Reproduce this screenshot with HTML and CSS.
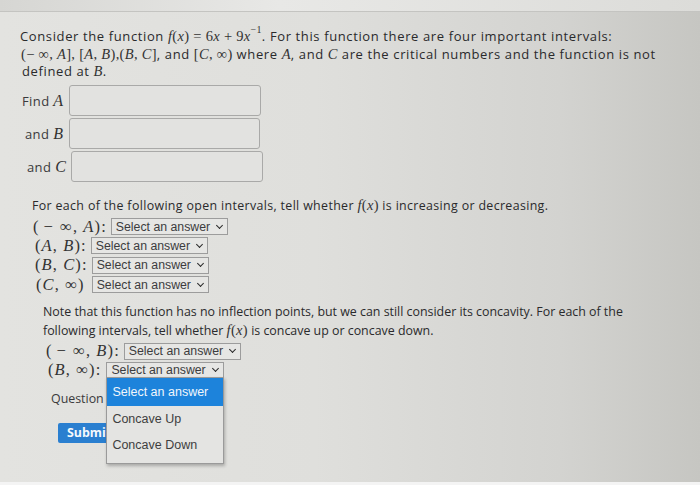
FILE: index.html
```html
<!DOCTYPE html>
<html>
<head>
<meta charset="utf-8">
<link rel="stylesheet" href="styles.css">
</head>
<body>
<div class="screen">
  <div class="topline"></div>
  <div class="intro">
    <p class="ln ln1">Consider the function <span class="m"><i>f</i>(<i>x</i>) = 6<i>x</i> + 9<i>x</i><sup>−1</sup></span>. For this function there are four important intervals:</p>
    <p class="ln ln2"><span class="m">(− ∞, <i>A</i>], [<i>A</i>, <i>B</i>),(<i>B</i>, <i>C</i>]</span>, and <span class="m">[<i>C</i>, ∞)</span> where <span class="m"><i>A</i></span>, and <span class="m"><i>C</i></span> are the critical numbers and the function is not</p>
    <p class="ln ln3">defined at <span class="m"><i>B</i></span>.</p>
  </div>

  <div class="finds">
    <div class="find f1"><span class="flabel">Find <span class="m"><i>A</i></span></span><span class="box"></span></div>
    <div class="find f2"><span class="flabel">and <span class="m"><i>B</i></span></span><span class="box"></span></div>
    <div class="find f3"><span class="flabel">and <span class="m"><i>C</i></span></span><span class="box"></span></div>
  </div>

  <div class="inc">
    <p class="ln">For each of the following open intervals, tell whether <span class="m"><i>f</i>(<i>x</i>)</span> is increasing or decreasing.</p>
    <div class="srow r1"><span class="m lbl">(<span class="neg">−</span>∞, <i>A</i>):</span><span class="sel">Select an answer<span class="chev"></span></span></div>
    <div class="srow r2"><span class="m lbl">(<i>A</i>, <i>B</i>):</span><span class="sel">Select an answer<span class="chev"></span></span></div>
    <div class="srow r3"><span class="m lbl">(<i>B</i>, <i>C</i>):</span><span class="sel">Select an answer<span class="chev"></span></span></div>
    <div class="srow r4"><span class="m lbl">(<i>C</i>, ∞)</span><span class="sel">Select an answer<span class="chev"></span></span></div>
  </div>

  <div class="conc">
    <p class="ln">Note that this function has no inflection points, but we can still consider its concavity. For each of the</p>
    <p class="ln">following intervals, tell whether <span class="m"><i>f</i>(<i>x</i>)</span> is concave up or concave down.</p>
    <div class="srow c1"><span class="m lbl">(<span class="neg">−</span>∞, <i>B</i>):</span><span class="sel">Select an answer<span class="chev"></span></span></div>
    <div class="srow c2"><span class="m lbl">(<i>B</i>, ∞):</span><span class="sel open">Select an answer<span class="chev"></span>
      <span class="menu">
        <span class="opt hi">Select an answer</span>
        <span class="opt">Concave Up</span>
        <span class="opt">Concave Down</span>
      </span>
    </span></div>
  </div>

  <div class="foot">
    <p class="question">Question</p>
    <span class="submit">Submit</span>
  </div>
  <div class="bottomstrip"></div>
</div>
</body>
</html>
```

FILE: styles.css
```css
html, body {
  margin: 0;
  padding: 0;
}
body {
  width: 700px;
  height: 485px;
  overflow: hidden;
  background: #d8d8d5;
}
.screen {
  position: relative;
  width: 700px;
  height: 485px;
  background: linear-gradient(90deg, #e3e3e0 0%, #dfdfdc 45%, #d3d3d0 80%, #c6c6c2 100%);
  font-family: "Open Sans", "DejaVu Sans", sans-serif;
  font-size: 12.4px;
  color: #2a2a2c;
  display: flex;
  flex-direction: column;
}
.topline {
  height: 11px;
  border-bottom: 1px solid #c4c4c1;
  background: linear-gradient(90deg, #d6d6d3, #e8e8e6 40%, #dcdcd9);
  flex: none;
}
p { margin: 0; }
.m {
  font-family: "Liberation Serif", "DejaVu Serif", serif;
  font-size: 14.5px;
  color: #333;
  letter-spacing: 0.3px;
}
.m sup { font-size: 10px; position: relative; top: -2px; }
.intro { padding: 11px 0 0 20px; font-size: 13px; letter-spacing: 0.62px; }
.ln { line-height: 18px; white-space: nowrap; }
.ln2 { padding-left: 1px; }
.ln3 { padding-left: 2px; line-height: 17px; }

.finds { padding-top: 6px; display: flex; flex-direction: column; gap: 3px; font-size: 13px; letter-spacing: 0.4px; }
.find { display: flex; align-items: center; height: 30px; }
.flabel { display: inline-block; color: #3a3a3c; }
.flabel .m { font-size: 16px; }
.f1 { padding-left: 22px; }
.f1 .flabel { width: 47px; }
.f2 { padding-left: 25px; }
.f2 .flabel { width: 44px; }
.f3 { padding-left: 27px; }
.f3 .flabel { width: 44px; }
.box {
  display: block;
  width: 190px;
  height: 29px;
  border: 1px solid #a9a9a8;
  border-radius: 3px;
  background: #e2e2e0;
}
.f2 .box { width: 189px; }

.inc { padding: 14px 0 0 32px; }
.inc .ln { margin-bottom: 2px; letter-spacing: 0.35px; }
.srow { display: flex; align-items: center; height: 19.4px; }
.lbl { font-size: 16.5px; margin-right: 4px; letter-spacing: 1.1px; }
.neg { margin: 0 6px 0 4px; }
.sel {
  position: relative;
  display: inline-flex;
  align-items: center;
  height: 15px;
  padding: 0 4px 0 4px;
  border: 1px solid #9c9c9c;
  background: #e6e6e4;
  font-family: "Liberation Sans", Arial, sans-serif;
  font-size: 12.3px;
  color: #3c3c3e;
  white-space: nowrap;
}
.chev {
  display: inline-block;
  width: 4px;
  height: 4px;
  border-right: 1.7px solid #2a2a2a;
  border-bottom: 1.7px solid #2a2a2a;
  transform: rotate(45deg);
  margin: -3px 1px 0 7px;
}
.r1 { padding-left: 1px; }
.r2 { padding-left: 3px; }
.r3 { padding-left: 3px; }
.r4 { padding-left: 4px; }
.r4 .lbl { margin-right: 7px; }

.conc { padding: 9px 0 0 43px; }
.conc .ln + .ln { margin-bottom: 1px; }
.c1 { padding-left: 3px; }
.c2 { padding-left: 5px; }
.c2 .lbl { margin-right: 5px; }

.menu {
  position: absolute;
  left: -1px;
  top: 14px;
  width: 116px;
  height: 85px;
  background: #e4e4e2;
  border: 1px solid #9a9a9a;
  box-shadow: 1px 2px 3px rgba(0,0,0,0.25);
  display: flex;
  flex-direction: column;
  z-index: 5;
}
.opt {
  display: flex;
  align-items: center;
  padding-left: 5px;
  height: 26px;
  font-size: 12.5px;
  color: #3e3e40;
}
.opt.hi {
  background: #1d83db;
  color: #f2f6fb;
  height: 28px;
}

.foot { padding: 10px 0 0 51px; }
.question { color: #3a3a3c; line-height: 18px; }
.submit {
  display: inline-block;
  margin: 15px 0 0 7px;
  width: 54px;
  height: 20px;
  line-height: 20px;
  background: #2a7fd0;
  color: #f4f8fc;
  font-weight: 700;
  font-size: 12.4px;
  padding-left: 9px;
  box-sizing: border-box;
  border-radius: 2px;
  white-space: nowrap;
  overflow: hidden;
}
.bottomstrip {
  position: absolute;
  left: 0;
  bottom: 0;
  width: 700px;
  height: 3px;
  background: #f4f4f4;
}
```
